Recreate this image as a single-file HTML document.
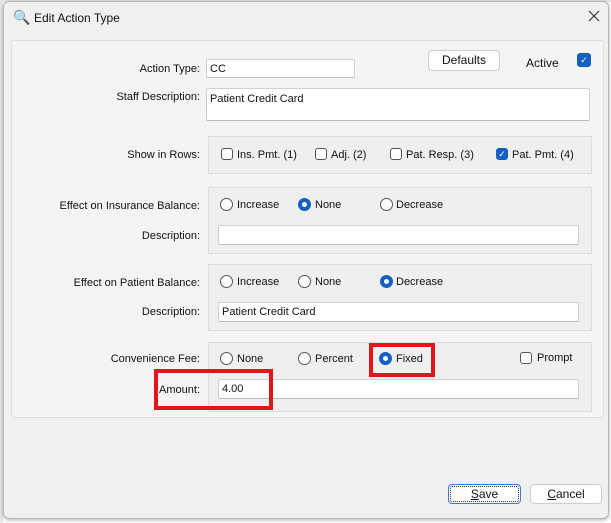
<!DOCTYPE html><html><head><style>
body{margin:0;width:611px;height:523px;background:#fff;position:relative;overflow:hidden;font-family:"Liberation Sans",sans-serif;font-size:11px;color:#111}
.a{position:absolute}
.win{left:3px;top:1px;width:604px;height:516px;background:#f0f0f0;border:1px solid #b8b8b8;border-radius:6px;box-shadow:0 1px 4px rgba(0,0,0,.3)}
.panel{left:11px;top:40px;width:591px;height:376px;background:#f4f4f4;border:1px solid #dedede;border-radius:3px}
.grp{border:1px solid #dcdcdc;background:#efefef;left:208px;width:382px}
.lbl{text-align:right;width:200px;left:0}
.inp{background:#fff;border:1px solid #d0d0d0;border-bottom-color:#bdbdbd;border-radius:2px;padding:0 3px;box-sizing:border-box;line-height:18px}
.cb{width:12px;height:12px;border:1px solid #555;border-radius:3px;background:#fff;box-sizing:border-box}
.cbk{background:#1360c2;border-color:#1360c2;color:#fff;font-size:9px;line-height:11px;text-align:center}
.rd{width:13px;height:13px;border:1px solid #555;border-radius:50%;background:#fff;box-sizing:border-box}
.rdk{border:4px solid #1360c2;background:#fff}
.btn{background:#fdfdfd;border:1px solid #cfcfcf;border-radius:4px;text-align:center;box-sizing:border-box}
.red{border:4px solid #e2141c;box-sizing:border-box}
</style></head><body>
<div class="a" style="left:0;top:0;width:611px;height:2px;background:#e6e6e6"></div>
<div class="a" style="left:0;top:0;width:3px;height:523px;background:#e8e8e8"></div>
<div class="a win"></div>
<div class="a" style="left:13px;top:9px;font-size:14px;color:#3a7bd5">&#x1F50D;</div>
<div class="a" style="left:34px;top:11px;font-size:12px">Edit Action Type</div>
<svg class="a" style="left:588px;top:10px" width="12" height="12"><path d="M1 1L11 11M11 1L1 11" stroke="#333" stroke-width="1.2"/></svg>
<div class="a panel"></div>

<div class="a lbl" style="top:63px">Action Type:</div>
<div class="a inp" style="left:206px;top:59px;width:149px;height:19px">CC</div>
<div class="a btn" style="left:428px;top:50px;width:72px;height:21px;line-height:18px;font-size:12px">Defaults</div>
<div class="a" style="left:526px;top:56px;font-size:12px">Active</div>
<div class="a cb cbk" style="left:577px;top:53px;width:14px;height:14px;line-height:13px">✓</div>
<div class="a lbl" style="top:91px">Staff Description:</div>
<div class="a inp" style="left:206px;top:88px;width:384px;height:33px;padding-top:1px">Patient Credit Card</div>

<div class="a grp" style="top:136px;height:36px"></div>
<div class="a lbl" style="top:149px">Show in Rows:</div>
<div class="a cb" style="left:221px;top:148px"></div><div class="a" style="left:237px;top:149px">Ins. Pmt. (1)</div>
<div class="a cb" style="left:315px;top:148px"></div><div class="a" style="left:331px;top:149px">Adj. (2)</div>
<div class="a cb" style="left:390px;top:148px"></div><div class="a" style="left:406px;top:149px">Pat. Resp. (3)</div>
<div class="a cb cbk" style="left:496px;top:148px">✓</div><div class="a" style="left:512px;top:149px">Pat. Pmt. (4)</div>

<div class="a grp" style="top:187px;height:65px"></div>
<div class="a lbl" style="top:200px">Effect on Insurance Balance:</div>
<div class="a rd" style="left:220px;top:198px"></div><div class="a" style="left:237px;top:199px">Increase</div>
<div class="a rd rdk" style="left:298px;top:198px"></div><div class="a" style="left:315px;top:199px">None</div>
<div class="a rd" style="left:380px;top:198px"></div><div class="a" style="left:396px;top:199px">Decrease</div>
<div class="a lbl" style="top:230px">Description:</div>
<div class="a inp" style="left:218px;top:225px;width:361px;height:20px"></div>

<div class="a grp" style="top:264px;height:65px"></div>
<div class="a lbl" style="top:277px">Effect on Patient Balance:</div>
<div class="a rd" style="left:220px;top:275px"></div><div class="a" style="left:237px;top:276px">Increase</div>
<div class="a rd" style="left:298px;top:275px"></div><div class="a" style="left:315px;top:276px">None</div>
<div class="a rd rdk" style="left:380px;top:275px"></div><div class="a" style="left:396px;top:276px">Decrease</div>
<div class="a lbl" style="top:306px">Description:</div>
<div class="a inp" style="left:218px;top:302px;width:361px;height:20px">Patient Credit Card</div>

<div class="a grp" style="top:342px;height:68px"></div>
<div class="a lbl" style="top:353px">Convenience Fee:</div>
<div class="a rd" style="left:220px;top:352px"></div><div class="a" style="left:237px;top:353px">None</div>
<div class="a rd" style="left:298px;top:352px"></div><div class="a" style="left:315px;top:353px">Percent</div>
<div class="a rd rdk" style="left:379px;top:352px"></div><div class="a" style="left:396px;top:353px">Fixed</div>
<div class="a cb" style="left:520px;top:352px"></div><div class="a" style="left:537px;top:352px">Prompt</div>
<div class="a lbl" style="top:384px">Amount:</div>
<div class="a inp" style="left:218px;top:379px;width:361px;height:20px">4.00</div>
<div class="a red" style="left:369px;top:343px;width:66px;height:34px"></div>
<div class="a red" style="left:154px;top:369px;width:119px;height:41px"></div>

<div class="a btn" style="left:448px;top:484px;width:73px;height:20px;line-height:18px;font-size:12px;border:1px solid #3a7bd5;outline:1px dotted #333;outline-offset:-3px"><u>S</u>ave</div>
<div class="a btn" style="left:530px;top:484px;width:72px;height:20px;line-height:18px;font-size:12px"><u>C</u>ancel</div>
</body></html>
